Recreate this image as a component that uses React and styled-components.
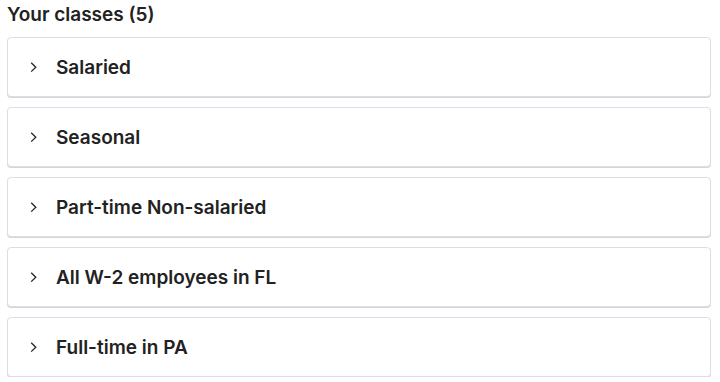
import styled, { createGlobalStyle } from "styled-components";

const GlobalStyle = createGlobalStyle`
  body {
    margin: 0;
    background: #fff;
    font-family: Inter, "Noto Sans", sans-serif;
    color: #1f2328;
  }
`;

const Page = styled.div`
  padding: 3px 9px 0 7px;
  display: flex;
  flex-direction: column;
`;

const Heading = styled.h2`
  margin: 0 0 10px;
  font-size: 19px;
  font-weight: 600;
  line-height: 24px;
  color: #222;
`;

const List = styled.div`
  display: flex;
  flex-direction: column;
  gap: 10px;
`;

const Card = styled.button`
  display: flex;
  align-items: center;
  gap: 16px;
  height: 60px;
  padding: 0 0 0 20px;
  border: 1px solid #dcdee3;
  border-radius: 4px;
  background: #fff;
  box-shadow: 0 1px 0 #d4d6db;
  font-family: inherit;
  cursor: pointer;
  text-align: left;
`;

const Chevron = styled.svg`
  width: 12px;
  height: 12px;
  flex: none;
`;

const Label = styled.span`
  font-size: 19px;
  font-weight: 600;
  color: #222;
`;

const classes = [
  "Salaried",
  "Seasonal",
  "Part-time Non-salaried",
  "All W-2 employees in FL",
  "Full-time in PA",
];

export default function App() {
  return (
    <>
      <GlobalStyle />
      <Page>
        <Heading>Your classes ({classes.length})</Heading>
        <List>
          {classes.map((c) => (
            <Card key={c}>
              <Chevron viewBox="0 0 12 12" fill="none" stroke="#222" strokeWidth="1.3">
                <path d="M3.2 1.8 L7.8 6.2 L3.2 10.6" />
              </Chevron>
              <Label>{c}</Label>
            </Card>
          ))}
        </List>
      </Page>
    </>
  );
}
